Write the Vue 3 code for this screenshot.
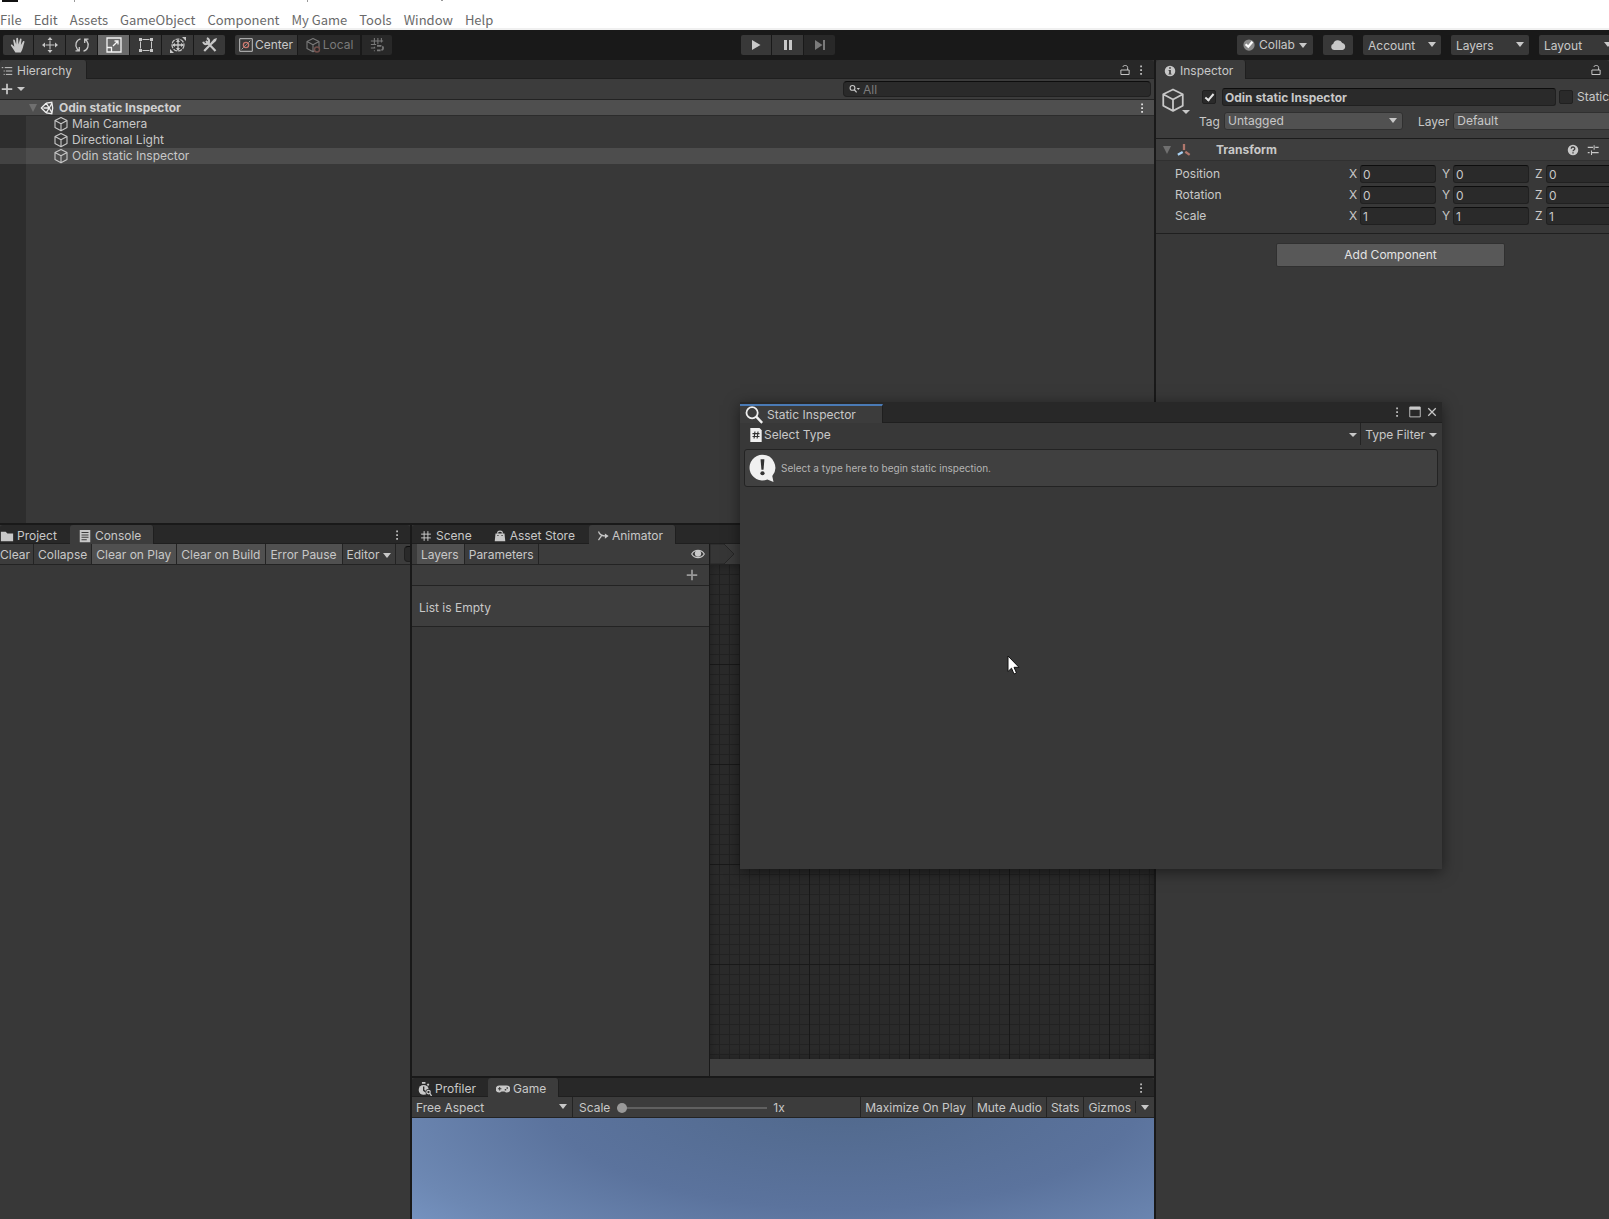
<script setup>
import { h, ref } from 'vue'

const S = 'fill="none" stroke="currentColor"'
const cube = `<path ${S} stroke-width="1.1" stroke-linejoin="round" d="M8 1.5 14 4.5V11.5L8 14.7 2 11.5V4.5ZM2 4.5 8 7.7 14 4.5M8 7.7V14.7"/>`
const icons = {
  hand: '<path fill="currentColor" d="M5.4 15.5C4 13 2.400 11 1 8.800c-.6-1 .7-1.700 1.500-.9l1.800 1.900L3.200 3.600c-.2-1.200 1.300-1.500 1.600-.3L6.200 7.600 6.300 1.600c0-1.300 1.700-1.300 1.800 0L8.500 7.500 9.900 2.300c.3-1.200 1.800-.8 1.600.4L10.900 8l2-3.500c.6-1 1.900-.4 1.500.7-1.200 3.300-1.500 7-3.600 10.300Z"/>',
  move: `<path ${S} stroke-dasharray="4.500 1" d="M8 8V2M8 8V14M8 8H2M8 8H14"/><path fill="currentColor" d="M8 0 10.500 3H5.500ZM8 16 5.500 13H10.500ZM0 8 3 5.500V10.500ZM16 8 13 10.500V5.500Z"/>`,
  rotate: `<path ${S} stroke-width="1.300" d="M6.500 1.800C2 3 .5 8.500 3.200 12L5 13.800M1.500 13.800H5.300V10M9.500 14.200C14 13 15.500 7.500 12.800 4L11 2.200M14.500 2.200H10.700V6"/>`,
  scale: `<path ${S} stroke-width="1.300" d="M1 1H15V15H1ZM1 10.500H5.500V15M7 9 12 4M8.500 4H12V7.500"/>`,
  rect: `<path ${S} d="M4.500 2.500H11.500M4.500 13.500H11.500M2.500 4.500V11.500M13.500 4.500V11.500"/><path fill="currentColor" d="M1 1H4V4H1ZM12 1H15V4H12ZM1 12H4V15H1ZM12 12H15V15H12Z"/>`,
  multi: `<circle cx="8" cy="8" r="6" ${S} stroke-width="1.200" stroke-dasharray="4 1"/><path ${S} stroke-width="1.300" d="M8 3V13M3 8H13"/><path fill="currentColor" d="M8 2 10 5H6ZM8 14 6 11H10ZM2 8 5 6V10ZM14 8 11 10V6ZM12 0H16V4ZM0 12V16H4Z"/>`,
  tools: `<path ${S} stroke-width="2.200" d="M4 4 13.500 14M2.200 14 9 7"/><path ${S} stroke-width="2" d="M4.800 1.200A3 3 0 1 1 1.200 4.800"/><path fill="currentColor" d="M8 6.500 12 2 15 1 14 4 9.500 8Z"/>`,
  center: `<path ${S} stroke-width="1.100" d="M.8.800H15.200V15.200H.8Z"/><path ${S} stroke-dasharray="2 1" d="M3 13 13 3"/><circle cx="8" cy="8" r="3" fill="none" stroke="#c9776d" stroke-width="1.500"/>`,
  local: `${cube}<circle cx="12" cy="12.500" r="2.500" fill="#292929" stroke="#73504c" stroke-width="1.400"/>`,
  snap: `<path ${S} stroke-width="1.200" d="M5 0V8M9 0V7M13 0V5M1 3.500H15M1 7.500H7M5 10V12M5 14V15M1 11.500H6"/><path ${S} stroke-width="2" stroke-dasharray="5 1" d="M8 9H12.500A2.500 2.500 0 0 1 12.500 14H8"/>`,
  play: '<path fill="currentColor" d="M4 3 12.500 8 4 13Z"/>',
  pause: '<path fill="currentColor" d="M4 3H7V13H4ZM9 3H12V13H9Z"/>',
  step: '<path fill="currentColor" d="M3 3 10.500 8 3 13ZM11 3H13V13H11Z"/>',
  collab: '<circle cx="8" cy="8" r="7.500" fill="#8b8b8b"/><path fill="none" stroke="#fff" stroke-width="3" d="M3.500 7 7 10.300 12.500 3.800"/>',
  cloud: '<path fill="currentColor" d="M4 13A3.200 3.200 0 0 1 3.300 6.800 4.800 4.800 0 0 1 12.300 6 3.600 3.600 0 0 1 12.500 13Z"/>',
  list: `<path ${S} stroke-width="1.300" d="M5 3.500H15M6.500 8H15M6.500 12.500H15M1 3.500H3M3.500 8H5M3.500 12.500H5"/>`,
  plus: `<path ${S} stroke-width="2" d="M8 2V14M2 8H14"/>`,
  unity: `<path ${S} stroke-width="1.500" stroke-linejoin="round" d="M7 2.500 1.500 8 7 13.500M4 8H10.500M10.500 8 7 2.500M10.500 8 7 13.500"/><path ${S} stroke-width="1.500" d="M7 2.500 13.500 1.500 14.500 8 13.500 14.500 7 13.500M10.500 8 14 2M10.500 8 14 14"/>`,
  cube,
  lock: `<path ${S} stroke-width="1.300" d="M2.500 8H13.500V14H2.500ZM11.500 8V4.500C11.500 1.500 6 1 5 4"/>`,
  dots: '<path fill="currentColor" d="M7 2H9.200V4.200H7ZM7 7H9.200V9.200H7ZM7 12H9.200V14.200H7Z"/>',
  search: `<circle cx="6" cy="6.500" r="3.200" ${S} stroke-width="1.500"/><path ${S} stroke-width="1.600" d="M8.500 9 11.500 12.500"/><path fill="currentColor" d="M11.500 6.500H16L13.700 9.200Z"/>`,
  info: '<circle cx="8" cy="8" r="7" fill="currentColor"/><path fill="#3c3c3c" d="M6.900 3H9.100V5H6.900ZM6 6.500H9.100V11.500H10.200V12.700H5.900V11.500H6.900V7.700H6Z"/>',
  transform: '<path stroke="#b0776c" stroke-width="2.600" fill="none" d="M8 1V8M9.500 10 14.500 13.500"/><path stroke="#a9d3f5" stroke-width="2.600" fill="none" d="M1 13.500 6.500 10.200"/>',
  help: '<circle cx="8" cy="8" r="7" fill="currentColor"/><path fill="none" stroke="#3e3e3e" stroke-width="1.800" d="M5.600 6.300C5.600 3.300 10.400 3.300 10.400 6.200 10.400 8 8 7.900 8 9.800M8 10.900V12.700"/>',
  preset: `<path ${S} stroke-width="1.400" d="M1 4.500H8M11 4.500H15.500M9.500 1.500V7.500M1 11.500H3.500M6.500 11.500H15.500M6 8.500V14.500"/>`,
  folder: '<path fill="currentColor" d="M1 3H6.500L8.500 5H15V14H1Z"/>',
  console: '<path fill="currentColor" fill-rule="evenodd" d="M2 1H14V15H2ZM4 3.500V4.700H12V3.500ZM4 6.200V7.400H12V6.200ZM4 8.900V10.100H12V8.900ZM4 11.600V12.800H10V11.600Z"/>',
  grid: `<path ${S} stroke-width="1.300" d="M5.500 1.500V14.500M10.500 1.500V14.500M1.500 5.500H14.500M1.500 10.500H14.500"/>`,
  bag: '<path fill="currentColor" d="M2 4.500H14L15 15H1Z"/><path fill="none" stroke="currentColor" stroke-width="1.500" d="M5 5V3C5 1 11 1 11 3V5"/><path fill="#282828" d="M4.500 6.500H6V8H4.500ZM10 6.500H11.500V8H10Z"/>',
  animator: `<path ${S} stroke-width="1.600" d="M2 2C3 5.500 6 8 12 8M2 13.500C3.500 11.500 4.500 9.500 6 8"/><path fill="currentColor" d="M10.500 4.500 15.500 8 10.500 11.500Z"/>`,
  eye: `<path ${S} stroke-width="1.300" d="M.8 8C4 2.500 12 2.500 15.200 8 12 13.500 4 13.500.8 8Z"/><circle cx="8" cy="7.500" r="3.600" fill="currentColor"/>`,
  profiler: '<circle cx="6.500" cy="9" r="5.700" fill="currentColor"/><path fill="currentColor" d="M4.500 0H8.500V2H4.500ZM10 3 11.500 1.500 13 3 11.500 4.500Z"/><path stroke="#282828" stroke-width="1.500" fill="none" d="M6.500 5V9.500L8.500 11"/><circle cx="12" cy="11.500" r="3.500" fill="#282828"/><circle cx="12" cy="11.500" r="2" fill="none" stroke="currentColor" stroke-width="1.400"/><path stroke="currentColor" stroke-width="1.500" d="M13.500 13 15.500 16"/>',
  game: '<path fill="currentColor" d="M4 4H12A4 4 0 0 1 12.500 12C11 12.300 10.500 10.800 9.500 10.800H6.500C5.500 10.800 5 12.300 3.500 12A4 4 0 0 1 4 4Z"/><path fill="none" stroke="#3c3c3c" stroke-width="1.200" d="M4.200 5.800V9.800M2.200 7.800H6.200"/><path fill="#3c3c3c" d="M10 8H11.700V9.700H10ZM12 6H13.700V7.700H12Z"/>',
  lens: `<circle cx="6.300" cy="6" r="5" ${S} stroke-width="1.600"/><path ${S} stroke-width="2.200" d="M10 9.500 15.300 15"/>`,
  script: '<path fill="#efefef" d="M1.500 0H12L14.500 2.500V16H1.500Z"/><path fill="none" stroke="#333" stroke-width="1.300" d="M6.800 4 5.800 12M10.300 4 9.300 12M4 6.500H12M4 9.700H12"/>',
  bubble: '<path fill="#f0f0f0" d="M7.700.500A7.300 7.300 0 0 1 13.300 12.500L14 16 10.500 14.500A7.300 7.300 0 1 1 7.700.500Z"/><path fill="#333" d="M6.600 3H8.800L8.300 9H7.100Z"/><circle cx="7.700" cy="11" r="1.200" fill="#333"/>',
  maximize: `<path ${S} stroke-width="1.200" d="M1 1.500H15V14.500H1Z"/><path fill="currentColor" d="M1 1H15V5H1Z"/>`,
  close: `<path ${S} stroke-width="2" d="M2 2 14 14M14 2 2 14"/>`,
}
const Icon = (p) => h('svg', { viewBox: '0 0 16 16', width: p.s || 14, height: p.s || 14, 'aria-hidden': 'true', innerHTML: icons[p.n] })
Icon.props = ['n', 's']

const menus = ['File', 'Edit', 'Assets', 'GameObject', 'Component', 'My Game', 'Tools', 'Window', 'Help']
const tools = ['hand', 'move', 'rotate', 'scale', 'rect', 'multi', 'tools']
const activeTool = ref('scale')
const objects = ['Main Camera', 'Directional Light', 'Odin static Inspector']
const selected = ref('Odin static Inspector')
const transform = ref([
  { name: 'Position', v: { X: 0, Y: 0, Z: 0 } },
  { name: 'Rotation', v: { X: 0, Y: 0, Z: 0 } },
  { name: 'Scale', v: { X: 1, Y: 1, Z: 1 } },
])
const objectName = ref('Odin static Inspector')
const enabled = ref(true)
const zoom = ref(1)
</script>

<template>
  <div class="editor">
    <header class="menubar">
      <svg class="caption" width="460" height="6" aria-hidden="true">
        <path fill="#111" d="M2 0H18V2H2Z" />
        <path fill="#999" d="M74 0H75V2H74ZM307 0H308V2H307ZM441 0H443V1H441Z" />
      </svg>
      <nav><a v-for="m in menus" :key="m" href="#">{{ m }}</a></nav>
    </header>

    <div class="toolbar">
      <div class="left group">
        <button v-for="t in tools" :key="t" class="tb" :class="{ active: t === activeTool }" :aria-label="t" @click="activeTool = t"><Icon :n="t" s="16" /></button>
      </div>
      <div class="pivot group">
        <button class="tb text"><Icon n="center" />Center</button>
        <button class="tb text dim"><Icon n="local" s="16" />Local</button>
        <button class="tb dim snap" aria-label="Snap"><Icon n="snap" /></button>
      </div>
      <div class="playback group">
        <button class="tb" aria-label="Play"><Icon n="play" s="16" /></button>
        <button class="tb" aria-label="Pause"><Icon n="pause" s="16" /></button>
        <button class="tb dim" aria-label="Step"><Icon n="step" s="16" /></button>
      </div>
      <div class="services">
        <button class="tb collab"><Icon n="collab" s="12" />Collab<i class="tri"></i></button>
        <button class="tb" aria-label="Cloud"><Icon n="cloud" s="16" /></button>
        <span v-for="d in ['Account', 'Layers', 'Layout']" :key="d" class="drop bar"><select :aria-label="d"><option>{{ d }}</option></select></span>
      </div>
    </div>

    <main class="docks">
      <section class="hierarchy panel">
        <div class="tabs">
          <button class="tab on first"><Icon n="list" s="12" />Hierarchy</button>
          <span class="tab-tools"><Icon n="lock" s="12" /><Icon n="dots" s="12" /></span>
        </div>
        <div class="strip create">
          <button class="add" aria-label="Create"><Icon n="plus" /><i class="tri small"></i></button>
          <label class="search"><Icon n="search" s="12" /><input type="text" placeholder="All" aria-label="Search hierarchy"></label>
        </div>
        <div class="scene"><i class="tri fold"></i><Icon n="unity" /><b>Odin static Inspector</b><Icon n="dots" s="12" class="more" /></div>
        <ul class="tree">
          <li v-for="o in objects" :key="o" :class="{ sel: o === selected }" @click="selected = o"><Icon n="cube" s="16" />{{ o }}</li>
        </ul>
      </section>

      <section class="console panel">
        <div class="tabs">
          <button class="tab project"><Icon n="folder" />Project</button>
          <button class="tab on"><Icon n="console" />Console</button>
          <span class="tab-tools"><Icon n="dots" s="12" /></span>
        </div>
        <div class="strip buttons">
          <button class="clear">Clear</button><button>Collapse</button><button class="down">Clear on Play</button><button class="down">Clear on Build</button><button class="down">Error Pause</button><button>Editor<i class="tri"></i></button>
          <label class="search cut"><Icon n="search" s="12" /><input type="text" aria-label="Search console"></label>
        </div>
      </section>

      <div class="right-stack">
        <section class="animator panel">
          <div class="tabs">
            <button class="tab scene-tab"><Icon n="grid" s="12" />Scene</button>
            <button class="tab store"><Icon n="bag" s="12" />Asset Store</button>
            <button class="tab on"><Icon n="animator" s="12" />Animator</button>
          </div>
          <div class="anim-body">
            <div class="anim-side">
              <div class="strip buttons"><button class="down">Layers</button><button>Parameters</button><Icon n="eye" class="eye" /></div>
              <div class="add-row"><button aria-label="Add layer"><Icon n="plus" /></button></div>
              <p class="empty">List is Empty</p>
            </div>
            <div class="graph">
              <div class="strip crumb"><svg width="26" height="20" aria-hidden="true"><path d="M0 0H14L24 10 14 20H0Z" fill="#363636" stroke="#262626" /></svg></div>
              <div class="canvas"></div>
              <div class="status"></div>
            </div>
          </div>
        </section>
        <section class="game panel">
          <div class="tabs">
            <button class="tab profiler"><Icon n="profiler" />Profiler</button>
            <button class="tab on"><Icon n="game" />Game</button>
            <span class="tab-tools"><Icon n="dots" s="12" /></span>
          </div>
          <div class="strip buttons">
            <span class="drop aspect"><select aria-label="Aspect"><option>Free Aspect</option></select></span>
            <label class="zoom">Scale<input v-model="zoom" type="range" min="1" max="5" step="0.1"><output>{{ zoom }}x</output></label>
            <button>Maximize On Play</button><button>Mute Audio</button><button>Stats</button><button class="giz">Gizmos</button><button class="giz-menu" aria-label="Gizmos menu"><i class="tri"></i></button>
          </div>
          <div class="view"></div>
        </section>
      </div>

      <aside class="inspector panel">
        <div class="tabs">
          <button class="tab on info"><Icon n="info" s="12" />Inspector</button>
          <span class="tab-tools"><Icon n="lock" s="12" /></span>
        </div>
        <div class="object">
          <span class="big-cube"><Icon n="cube" s="26" /><i class="tri small"></i></span>
          <div class="object-fields">
            <div class="line">
              <input v-model="enabled" type="checkbox" aria-label="Enabled">
              <input v-model="objectName" type="text" class="name" aria-label="Name">
              <label class="static"><input type="checkbox">Static</label>
            </div>
            <div class="line tags">
              <label for="tag">Tag</label><span class="drop field"><select id="tag"><option>Untagged</option></select></span>
              <label for="layer" class="layer">Layer</label><span class="drop field"><select id="layer"><option>Default</option></select></span>
            </div>
          </div>
        </div>
        <div class="comp-head"><i class="tri fold"></i><Icon n="transform" /><b>Transform</b><Icon n="help" s="12" /><Icon n="preset" s="12" /></div>
        <div class="comp-body">
          <div v-for="r in transform" :key="r.name" class="vec">
            <span>{{ r.name }}</span>
            <label v-for="(n, axis) in r.v" :key="axis">{{ axis }}<input v-model="r.v[axis]" type="text"></label>
          </div>
        </div>
        <button class="add-comp">Add Component</button>
      </aside>
    </main>

    <section class="window" aria-label="Static Inspector">
      <div class="win-bar">
        <button class="win-tab"><Icon n="lens" s="18" />Static Inspector</button>
        <span class="win-tools"><Icon n="dots" s="12" /><button aria-label="Maximize"><Icon n="maximize" s="12" /></button><button aria-label="Close"><Icon n="close" s="10" /></button></span>
      </div>
      <div class="type-row">
        <button class="type"><Icon n="script" />Select Type<i class="tri small"></i></button>
        <button class="filter">Type Filter<i class="tri small"></i></button>
      </div>
      <p class="note"><Icon n="bubble" s="28" />Select a type here to begin static inspection.</p>
    </section>
    <svg class="pointer" width="13" height="20" viewBox="0 0 13 20" aria-hidden="true"><path d="M1 1V16.500L4.500 13.200 7 19 9.500 18 7 12.300H12Z" fill="#fff" stroke="#111" /></svg>
  </div>
</template>

<style>
body { margin: 0; background: #191919; overflow-x: hidden; }
</style>

<style scoped>
.editor { position: relative; display: flex; flex-direction: column; min-height: 100vh; overflow: hidden; background: #191919; color: #c8c8c8; font: 12px/16px Inter, "Liberation Sans", sans-serif; }
.editor * { box-sizing: border-box; }
svg { flex: none; display: block; }
button, input, select { margin: 0; padding: 0; border: 0; border-radius: 0; background: none; color: inherit; font: inherit; outline: 0; }
button { display: flex; align-items: center; white-space: nowrap; }
select { appearance: none; width: 100%; height: 100%; }
p, ul { margin: 0; padding: 0; list-style: none; }

.tri { flex: none; width: 0; height: 0; border: solid transparent; border-width: 5px 4px 0; border-top-color: #c8c8c8; }
.tri.small { border-width: 4px 4px 0; border-top-color: #c8c8c8; }
.tri.fold { border-width: 8px 4px 0; border-top-color: #707070; }
.drop { position: relative; display: block; }
.drop::after { content: ""; position: absolute; right: 5px; top: 50%; margin-top: -3px; border: solid transparent; border-width: 5px 4px 0; border-top-color: #c8c8c8; pointer-events: none; }

.menubar { height: 30px; background: #fff; border-bottom: 2px solid #f0f0f0; }
.caption { height: 6px; }
nav { display: flex; gap: 12px; font: 13px/20px "Noto Sans CJK SC", sans-serif; height: 22px; align-items: center; }
nav a { color: #6a6a6a; text-decoration: none; white-space: nowrap; margin-top: 5px; }

.toolbar { position: relative; display: flex; align-items: center; height: 30px; padding-left: 3px; }
.group { display: flex; gap: 1px; }
.pivot { margin-left: 10px; }
.tb { justify-content: center; width: 31px; height: 20px; background: #383838; }
.tb:first-child { width: 30px; border-radius: 2px 0 0 2px; }
.tb:last-child { border-radius: 0 2px 2px 0; }
.tb.active { background: #6a6a6a; color: #f4f4f4; }
.tb.dim { background: #282828; color: #7a7a7a; }
.tb.text { width: 62px; gap: 2px; }
.snap { width: 30px; margin-left: 1px; }
.playback { position: absolute; left: 46%; margin-left: 1px; }
.services { position: absolute; right: -8px; display: flex; gap: 10px; }
.services .tb { border-radius: 2px; width: 30px; }
.services .collab { width: 76px; gap: 4px; }
.drop.bar { width: 78px; height: 20px; background: #383838; border-radius: 2px; }
.drop.bar select { padding: 1px 0 0 5px; }

.docks { flex: 1; display: grid; grid-template-columns: 410px minmax(0, 1fr) 453px; grid-template-rows: 463fr 694fr; gap: 2px; }
.panel { display: flex; flex-direction: column; min-width: 0; min-height: 0; background: #383838; overflow: hidden; }
.hierarchy { grid-column: 1 / 3; }
.console { grid-area: 2 / 1; }
.right-stack { grid-area: 2 / 2; display: grid; grid-template-rows: 551fr 141fr; gap: 2px; min-width: 0; }
.inspector { grid-area: 1 / 3 / 3; }

.tabs { display: flex; height: 19px; background: #282828; border-radius: 3px 3px 0 0; box-shadow: inset 0 -1px #1f1f1f; flex: none; }
.tab { height: 19px; gap: 3px; padding: 2px 12px 0 8px; }
.tab.on { background: #3c3c3c; border-radius: 3px 3px 0 0; border-right: 1px solid #1f1f1f; }
.tab.first { padding-left: 1px; padding-right: 14px; }
.tab.first, .info, .scene-tab, .store { gap: 4px; }
.tab-tools { display: flex; align-items: center; gap: 4px; margin-left: auto; padding-right: 7px; }
.strip { display: flex; align-items: center; height: 21px; background: #3c3c3c; border-bottom: 1px solid #232323; flex: none; }
.add { gap: 3px; }
.create { justify-content: space-between; padding-right: 3px; }
.search { display: flex; align-items: center; width: 308px; height: 16px; padding-left: 4px; gap: 3px; border: 1px solid #202020; border-top-color: #0d0d0d; border-radius: 4px; background: #2a2a2a; }
.search input { width: 100%; padding-top: 1px; }
.search input::placeholder { color: #7c7c7c; opacity: 1; }
.scene { display: flex; align-items: center; height: 16px; padding-left: 29px; background: #4f4f4f; border-bottom: 1px solid #2c2c2c; flex: none; }
.scene svg { margin-left: 3px; color: #eee; }
.scene b { margin-left: 5px; font-weight: 700; color: #d0d0d0; }
.scene .more { margin-left: auto; margin-right: 6px; }
.tree { flex: 1; background: linear-gradient(90deg, #2d2d2d 26px, transparent 26px); }
.tree li { display: flex; align-items: center; gap: 3px; height: 16px; padding-left: 53px; }
.tree .sel { background: linear-gradient(90deg, #434343 26px, #4d4d4d 26px); }

.buttons > button { height: 20px; padding: 2px 4px 0; border-right: 1px solid #232323; gap: 3px; }
.buttons > .clear { padding-left: 0; padding-right: 3px; }
.buttons > .down { padding-right: 5px; background: #505050; }
.project { padding-left: 0; padding-right: 13px; }
.cut { flex: none; margin-left: 8px; }
.store { padding-left: 10px; padding-right: 14px; }
.profiler { padding-left: 6px; }

.anim-body { flex: 1; display: flex; min-height: 0; }
.anim-side { display: flex; flex-direction: column; width: 298px; border-right: 1px solid #191919; }
.anim-side .strip { padding-left: 5px; }
.eye { margin: 0 4px 0 auto; }
.add-row { display: flex; justify-content: flex-end; align-items: center; height: 21px; padding-right: 10px; color: #999; background: #3c3c3c; border-bottom: 1px solid #232323; }
.empty { height: 41px; padding: 14px 7px 0; background: #3e3e3e; border-bottom: 1px solid #232323; }
.graph { flex: 1; display: flex; flex-direction: column; min-width: 0; }
.canvas { flex: 1; background-color: #2a2a2a; box-shadow: inset 0 0 10px rgba(0, 0, 0, .3);
  background-image: linear-gradient(90deg, #191919 1px, transparent 1px), linear-gradient(#191919 1px, transparent 1px), linear-gradient(90deg, #222 1px, transparent 1px), linear-gradient(#222 1px, transparent 1px);
  background-size: 100px 100px, 100px 100px, 10px 10px, 10px 10px; background-position: -1px 0, 0 -1px, -1px 0, 0 -1px; }
.status { height: 17px; background: #3f3f3f; }

.aspect { width: 161px; height: 20px; padding-left: 4px; border-right: 1px solid #232323; }
.aspect select { padding-top: 2px; }
.zoom { display: flex; align-items: center; flex: 1; padding: 2px 0 0 6px; height: 20px; border-right: 1px solid #232323; }
.zoom input { appearance: none; width: 150px; height: 10px; margin: 0 6px 0 7px; background: linear-gradient(#606060, #606060) center / 100% 2px no-repeat; }
.zoom input::-webkit-slider-thumb { appearance: none; width: 10px; height: 10px; border-radius: 50%; background: #999; }
.zoom + button { padding-right: 6px; }
.buttons > .giz { border: 0; }
.buttons > .giz-menu { height: 12px; padding: 0 5px; border: 0; border-left: 1px solid #232323; }
.view { flex: 1; background: radial-gradient(ellipse 80% 220% at 58% -20%, #50688b 0%, #5b739d 50%, #6d88b3 80%, #83a3d4 110%); }

.object { display: flex; height: 60px; background: #3c3c3c; border-bottom: 1px solid #1c1c1c; flex: none; }
.big-cube { display: flex; width: 46px; flex: none; padding: 8px 0 0 4px; }
.big-cube .tri { margin: 23px 0 0 -4px; }
.object-fields { flex: none; padding-top: 9px; }
.line { display: flex; align-items: center; height: 18px; }
input[type="checkbox"] { appearance: none; width: 14px; height: 14px; background: #2a2a2a; border: 1px solid #202020; border-radius: 2px; }
input[type="checkbox"]:checked::after { content: ""; display: block; width: 3px; height: 7px; margin: 1px 0 0 4px; border: solid #e4e4e4; border-width: 0 2px 2px 0; transform: rotate(40deg); }
.name, .vec input { height: 18px; padding: 0 2px; background: #2a2a2a; border: 1px solid #202020; border-top-color: #0d0d0d; border-radius: 3px; }
.name { width: 334px; margin: 0 3px 0 6px; font-weight: 700; }
.static { display: flex; align-items: center; gap: 4px; }
.tags { margin-top: 6px; margin-left: -3px; }
.tags label { padding-top: 2px; }
.drop.field { width: 179px; height: 18px; margin-left: 4px; background: #515151; border: 1px solid #303030; border-radius: 3px; }
.field select { padding-left: 3px; }
.layer { margin-left: 15px; }
.comp-head { display: flex; align-items: center; height: 22px; padding: 1px 10px 0 7px; background: #3e3e3e; border-bottom: 1px solid #303030; flex: none; }
.comp-head svg { margin-left: 8px; }
.comp-head .fold + svg { margin-left: 6px; }
.comp-head b { flex: 1; margin-left: 25px; font-weight: 700; }
.comp-body { display: flex; flex-direction: column; gap: 3px; padding: 4px 0 8px 19px; border-bottom: 1px solid #1f1f1f; }
.vec { display: flex; align-items: center; height: 18px; }
.vec span { width: 174px; flex: none; }
.vec label { display: flex; align-items: center; justify-content: space-between; width: 87px; margin-right: 6px; flex: none; }
.vec input { width: 76px; }
.add-comp { justify-content: center; width: 229px; height: 24px; margin: 9px 0 0 120px; border: 1px solid #303030; border-radius: 2px; background: #585858; color: #e4e4e4; }

.window { position: absolute; left: 740px; top: 402px; width: 702px; height: 467px; background: #383838; box-shadow: 0 3px 14px rgba(0, 0, 0, .5); }
.win-bar { display: flex; height: 21px; padding-top: 2px; background: #282828; border-bottom: 1px solid #1f1f1f; }
.win-tab { width: 143px; height: 19px; gap: 4px; padding: 0 0 0 5px; border-top: 2px solid #4a7ab5; border-right: 1px solid #1f1f1f; background: #3c3c3c; }
.win-tab svg { color: #f0f0f0; }
.win-tools { display: flex; align-items: center; gap: 6px; height: 16px; margin-left: auto; padding-right: 5px; }
.type-row { display: flex; height: 22px; }
.type { flex: 1; gap: 1px; padding: 2px 3px 0 9px; border-right: 1px solid #232323; }
.type .tri { margin-left: auto; }
.filter { gap: 4px; padding: 2px 5px 0 4px; }
.note { display: flex; align-items: center; gap: 4px; height: 38px; margin: 4px 4px 0; padding-left: 4px; border: 1px solid #232323; border-radius: 3px; background: #404040; color: #b4b4b4; font-size: 10px; }
.pointer { position: absolute; left: 1007px; top: 655px; }
</style>
